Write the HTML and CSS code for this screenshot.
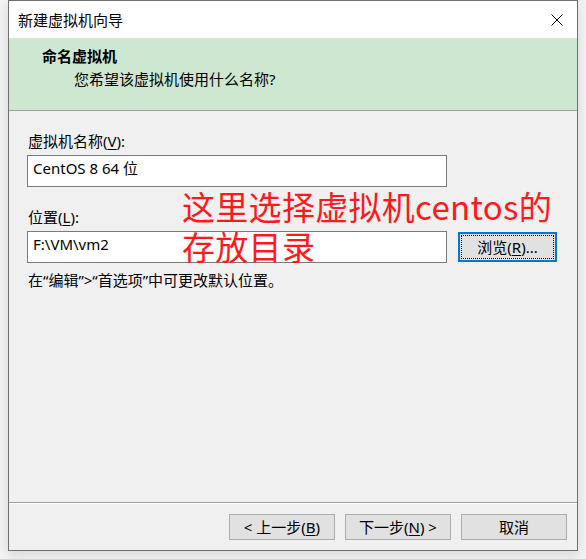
FILE: index.html
```html
<!DOCTYPE html>
<html lang="zh-CN">
<head>
<meta charset="utf-8">
<title>新建虚拟机向导</title>
<link rel="stylesheet" href="styles.css">
</head>
<body>
<div class="window">
  <div class="titlebar">
    <span class="title">新建虚拟机向导</span>
    <svg class="close" width="12" height="12" viewBox="0 0 12 12"><path d="M0.5 0.5 L11.5 11.5 M11.5 0.5 L0.5 11.5" stroke="#000" stroke-width="1" fill="none"/></svg>
  </div>
  <div class="header">
    <div class="h-title">命名虚拟机</div>
    <div class="h-sub">您希望该虚拟机使用什么名称?</div>
  </div>
  <div class="content">
    <div class="label">虚拟机名称(<u>V</u>):</div>
    <div class="field field-wide">CentOS 8 64 位</div>
    <div class="label label-gap">位置(<u>L</u>):</div>
    <div class="row">
      <div class="field field-wide">F:\VM\vm2</div>
      <div class="btn btn-browse"><span class="focus">浏览(<u>R</u>)...</span></div>
    </div>
    <div class="note">在“编辑”&gt;“首选项”中可更改默认位置。</div>
    <div class="annotation">这里选择虚拟机centos的<br>存放目录</div>
  </div>
  <div class="footer">
    <div class="btn">&lt; 上一步(<u>B</u>)</div>
    <div class="btn">下一步(<u>N</u>) &gt;</div>
    <div class="btn">取消</div>
  </div>
</div>
</body>
</html>
```

FILE: styles.css
```css
html, body {
  margin: 0;
  padding: 0;
}
body {
  background: #f3f3f3;
  width: 586px;
  height: 559px;
  overflow: hidden;
  font-family: "Noto Sans", "Noto Sans CJK SC", sans-serif;
  font-size: 15px;
  color: #000;
}
u {
  text-decoration: underline;
  text-underline-offset: 2px;
}
.window {
  margin-left: 8px;
  width: 570px;
  height: 551px;
  box-sizing: border-box;
  border: 1px solid #6f6f6f;
  background: #f0f0f0;
  display: flex;
  flex-direction: column;
  box-shadow: 0 4px 12px rgba(0,0,0,0.12);
}
.titlebar {
  height: 37px;
  background: #fff;
  display: flex;
  align-items: center;
  justify-content: space-between;
  padding: 0 14px 0 9px;
  flex-shrink: 0;
}
.title {
  line-height: 20px;
  padding-top: 1px;
}
.close {
  display: block;
}
.header {
  background: #cde7d0;
  border-bottom: 1px solid #a0a0a0;
  flex-shrink: 0;
  box-sizing: border-box;
  padding: 8px 0 0 33px;
  height: 73px;
}
.h-title {
  font-weight: bold;
  line-height: 20px;
}
.h-sub {
  line-height: 20px;
  padding-left: 32px;
  margin-top: 3px;
}
.content {
  flex: 1;
  position: relative;
  padding: 20px 0 0 18px;
}
.label {
  line-height: 20px;
  padding-left: 1px;
  margin-bottom: 4px;
}
.label-gap {
  margin-top: 20px;
}
.field {
  box-sizing: border-box;
  height: 32px;
  border: 1px solid #7a7a7a;
  background: #fff;
  padding: 3px 0 0 5px;
  line-height: 18px;
}
.field-wide {
  width: 420px;
}
.row {
  display: flex;
  align-items: flex-start;
  gap: 11px;
}
.btn {
  box-sizing: border-box;
  width: 106px;
  height: 26px;
  border: 1px solid #adadad;
  background: #e1e1e1;
  display: flex;
  align-items: center;
  justify-content: center;
  line-height: 18px;
}
.btn-browse {
  width: 99px;
  height: 30px;
  margin-top: 1px;
  border: 2px solid #0078d7;
  padding: 1px;
}
.focus {
  flex: 1;
  align-self: stretch;
  border: 1px dotted #000;
  display: flex;
  align-items: center;
  justify-content: center;
}
.note {
  margin-top: 7px;
  line-height: 20px;
  padding-left: 1px;
}
.annotation {
  position: absolute;
  left: 173px;
  top: 75px;
  color: #ff1a1a;
  font-family: "Noto Sans CJK SC", sans-serif;
  font-size: 33px;
  line-height: 40px;
  letter-spacing: 0.3px;
}
.footer {
  flex-shrink: 0;
  border-top: 1px solid #a0a0a0;
  box-shadow: inset 0 1px 0 #fff;
  padding: 11px 10px 10px 0;
  display: flex;
  justify-content: flex-end;
  gap: 10px;
}
```
